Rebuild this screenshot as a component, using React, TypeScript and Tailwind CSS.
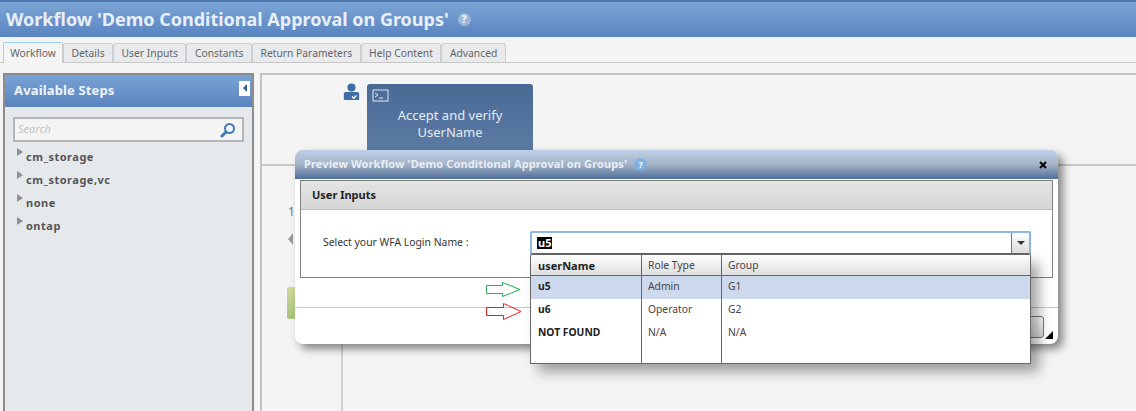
const ui = { fontFamily: '"Noto Sans", "DejaVu Sans", sans-serif' };

const tabs = ["Details", "User Inputs", "Constants", "Return Parameters", "Help Content", "Advanced"];
const steps = ["cm_storage", "cm_storage,vc", "none", "ontap"];
const rows = [
  { name: "u5", role: "Admin", group: "G1", selected: true },
  { name: "u6", role: "Operator", group: "G2" },
  { name: "NOT FOUND", role: "N/A", group: "N/A" },
];

function HelpDot({ className }: { className: string }) {
  return (
    <span className={`flex items-center justify-center rounded-full font-bold text-white ${className}`}>?</span>
  );
}

function Arrow({ color, className, head }: { color: string; className: string; head: string }) {
  return (
    <svg className={`absolute ${className}`} width="36" height="18" fill="none" stroke={color} strokeWidth="1">
      <polygon points={head} />
    </svg>
  );
}

function StepsPanel() {
  return (
    <aside className="flex w-[251px] shrink-0 flex-col border-2 border-b-0 border-[#8c8c8c] bg-[#e6e9ec]">
      <div className="flex h-[32px] items-center justify-between bg-gradient-to-b from-[#78a2d4] to-[#5a84bf] pl-[9px] pr-[2px]">
        <span className="text-[13px] font-bold tracking-[0.15px] text-[#eef3f9]">Available Steps</span>
        <span className="mb-[6px] flex h-[15px] w-[11px] items-center justify-center bg-white">
          <span className="h-0 w-0 border-y-[4px] border-r-[4px] border-y-transparent border-r-[#335f96]" />
        </span>
      </div>
      <div className="px-[8px] pt-[10px]">
        <div className="flex h-[25px] items-center justify-between border-2 border-[#b5b5b5] bg-[#f4f4f4] pl-[3px] pr-[6px]">
          <span className="text-[11px] italic text-[#c2c2c2]">Search</span>
          <svg width="16" height="16" viewBox="0 0 16 16" fill="none">
            <circle cx="9.5" cy="6.5" r="4.5" stroke="#3f78b5" strokeWidth="2" />
            <path d="M6 10 2 14" stroke="#3f78b5" strokeWidth="3" strokeLinecap="round" />
          </svg>
        </div>
      </div>
      <ul className="mt-[5px] flex flex-col gap-[3px] pl-[12px]">
        {steps.map((s) => (
          <li key={s} className="flex h-[20px] items-start gap-[3px]">
            <span className="mt-[1px] h-0 w-0 border-y-[4px] border-l-[6px] border-y-transparent border-l-[#8f8f8f]" />
            <span className="mt-[3px] text-[11px] font-bold leading-[14px] tracking-[0.5px] text-[#555]">{s}</span>
          </li>
        ))}
      </ul>
    </aside>
  );
}

function Canvas() {
  return (
    <main className="relative ml-[6px] flex min-w-0 flex-1 flex-col border-2 border-r-0 border-b-0 border-[#c4c4c4] bg-[#f4f4f4]">
      <div className="flex h-[91px] shrink-0 items-start border-b-2 border-[#c8c8c8] pl-[81px] pt-[9px]">
        <svg className="-mt-[1px]" width="17" height="18" viewBox="0 0 17 20">
          <circle cx="8.5" cy="5" r="4.5" fill="#3f6ea6" />
          <path d="M0 12q0-2 2-2h13q2 0 2 2v7H0z" fill="#3f6ea6" />
          <path d="m9 15 2 2 3-3" stroke="#fff" strokeWidth="1.5" fill="none" />
        </svg>
        <div className="ml-[7px] flex h-[82px] w-[166px] flex-col rounded-t-[3px] bg-gradient-to-b from-[#4a6a96] to-[#5f7fa8] text-[#e5ebf2]">
          <svg className="ml-[5px] mt-[5px]" width="17" height="13" viewBox="0 0 17 13" fill="none" stroke="#dfe6ef">
            <rect x="1" y="1" width="15" height="11" />
            <path d="m3 4 3 2-3 2M7 9h4" />
          </svg>
          <p className="mt-[5px] text-center text-[13px] leading-[17px]">Accept and verify<br />UserName</p>
        </div>
      </div>
      <div className="flex flex-1">
        <div className="flex w-[81px] shrink-0 flex-col border-r-2 border-[#d0d0d0] pl-[25px] pt-[39px]">
          <span className="ml-[1px] text-[12px] leading-[14px] text-[#777]">1</span>
          <span className="ml-[1px] mt-[14px] h-0 w-0 border-y-[6px] border-r-[5px] border-y-transparent border-r-[#9a9a9a]" />
          <span className="mt-[42px] h-[32px] w-[10px] rounded-l-[2px] bg-gradient-to-b from-[#ced99b] to-[#a9c47c]" />
        </div>
      </div>
    </main>
  );
}

function Picker() {
  return (
    <div className="absolute left-[229px] top-[50px] z-10 w-[501px]">
      <div className="flex h-[24px] rounded-[2px] border-2 border-[#8db8e2] border-b-[#666] bg-white">
        <span className="flex flex-1 items-center pl-[5px]">
          <span className="bg-black px-[1px] text-[11px] font-bold leading-[12px] text-white">u5</span>
        </span>
        <span className="flex w-[18px] items-center justify-center border-l border-[#777] bg-gradient-to-b from-white to-[#dcdcdc]">
          <span className="h-0 w-0 border-x-[4px] border-t-[4px] border-x-transparent border-t-[#333]" />
        </span>
      </div>
      <div className="h-[109px] border border-t-0 border-[#666] bg-white shadow-[8px_8px_12px_rgba(0,0,0,0.35)]">
        <div className="grid h-[21px] grid-cols-[111px_80px_1fr] border-b border-[#666] bg-gradient-to-b from-white to-[#dedede] text-[10.3px] text-[#444]">
          <span className="border-r border-[#666] pl-[7px] text-[11px] font-bold leading-[21px] text-[#222]">userName</span>
          <span className="border-r border-[#666] pl-[6px] leading-[21px]">Role Type</span>
          <span className="pl-[6px] leading-[21px]">Group</span>
        </div>
        <div className="grid h-[87px] grid-cols-[111px_80px_1fr] text-[10.3px]">
          {[0, 1, 2].map((col) => (
            <div key={col} className={col < 2 ? "border-r border-[#666]" : ""}>
              {rows.map((r) => (
                <div key={r.name} className={`h-[23px] leading-[21px] ${r.selected ? "bg-[#cddaee]" : ""} ${col === 0 ? "pl-[7px] font-bold text-[#222]" : "pl-[6px] text-[#444]"}`}>
                  {col === 0 ? r.name : col === 1 ? r.role : r.group}
                </div>
              ))}
            </div>
          ))}
        </div>
      </div>
    </div>
  );
}

function Dialog() {
  return (
    <section className="absolute left-[295px] top-[150px] z-10 flex h-[194px] w-[763px] flex-col rounded-[8px] bg-white shadow-[5px_5px_9px_rgba(0,0,0,0.45)]">
      <header className="flex h-[29px] shrink-0 items-center rounded-t-[8px] bg-gradient-to-b from-[#bdd0e8] via-[#a5b3c6] to-[#4f6f9c] pl-[9px] pr-[11px]">
        <span className="text-[11px] font-bold tracking-[0.12px] text-[#e8eef5]">Preview Workflow 'Demo Conditional Approval on Groups'</span>
        <HelpDot className="ml-[7px] h-[13px] w-[13px] bg-[#7fb0e0] text-[9px]" />
        <svg className="ml-auto" width="8" height="8" viewBox="0 0 8 8" stroke="#000" strokeWidth="2">
          <path d="m1 1 6 6M7 1 1 7" />
        </svg>
      </header>
      <div className="relative mx-[5px] mt-[1px] h-[98px] shrink-0 border border-[#808080]">
        <div className="flex h-[29px] items-center border-b border-[#bdbdbd] bg-gradient-to-b from-[#e4e4e4] to-[#d6d6d6] pl-[11px] text-[11px] font-bold text-[#222]">User Inputs</div>
        <div className="pl-[22px] pt-[24px] text-[10.4px] leading-[16px] text-[#333]">Select your WFA Login Name :</div>
        <Picker />
      </div>
      <div className="mt-[29px] h-px shrink-0 bg-[#c8c8c8]" />
      <div className="flex flex-1 items-start justify-end pr-[14px] pt-[8px]">
        <span className="h-[22px] w-[40px] rounded-[3px] border border-[#777] bg-gradient-to-b from-white to-[#dcdcdc]" />
      </div>
      <span className="absolute bottom-[5px] right-[5px] h-0 w-0 border-b-[8px] border-l-[8px] border-b-black border-l-transparent" />
      <Arrow color="#22b14c" className="left-[191px] top-[132px]" head="0.5,3.5 16.5,3.5 16.5,0.5 34,7.5 16.5,14.5 16.5,11.5 0.5,11.5" />
      <Arrow color="#ed1c24" className="left-[191px] top-[153px]" head="0.5,4.5 17.5,4.5 17.5,0.5 35,8.5 17.5,16.5 17.5,12.5 0.5,12.5" />
    </section>
  );
}

export default function App() {
  return (
    <div className="relative flex h-[411px] w-[1136px] flex-col overflow-hidden bg-[#f4f4f4]" style={ui}>
      <div className="flex h-[37px] shrink-0 items-center border-t-2 border-[#4f78b0] bg-gradient-to-b from-[#7ba5d6] to-[#5a84bf] pl-[6px]">
        <h1 className="text-[18px] font-bold text-[#e9eff7]">Workflow 'Demo Conditional Approval on Groups'</h1>
        <HelpDot className="ml-[9px] h-[13px] w-[13px] bg-[#9db8d8] text-[10px]" />
      </div>
      <nav className="mt-[6px] flex h-[20px] shrink-0 items-end border-b border-[#c8c8c8] pl-[3px] text-[10.3px] text-[#666]">
        <span className="relative top-px flex h-[21px] w-[60px] items-center justify-center rounded-t-[2px] border border-b-0 border-[#c8c8c8] border-t-[#9fd0ef] bg-[#f4f4f4] pt-[1px]">Workflow</span>
        {tabs.map((t) => (
          <span key={t} className="flex h-[19px] items-center rounded-t-[3px] border border-b-0 border-[#c8ced4] bg-[#e8eaec] px-[7.5px] pt-[1px]">{t}</span>
        ))}
      </nav>
      <div className="mt-[10px] flex min-h-0 flex-1 pl-[3px]">
        <StepsPanel />
        <Canvas />
      </div>
      <Dialog />
    </div>
  );
}
